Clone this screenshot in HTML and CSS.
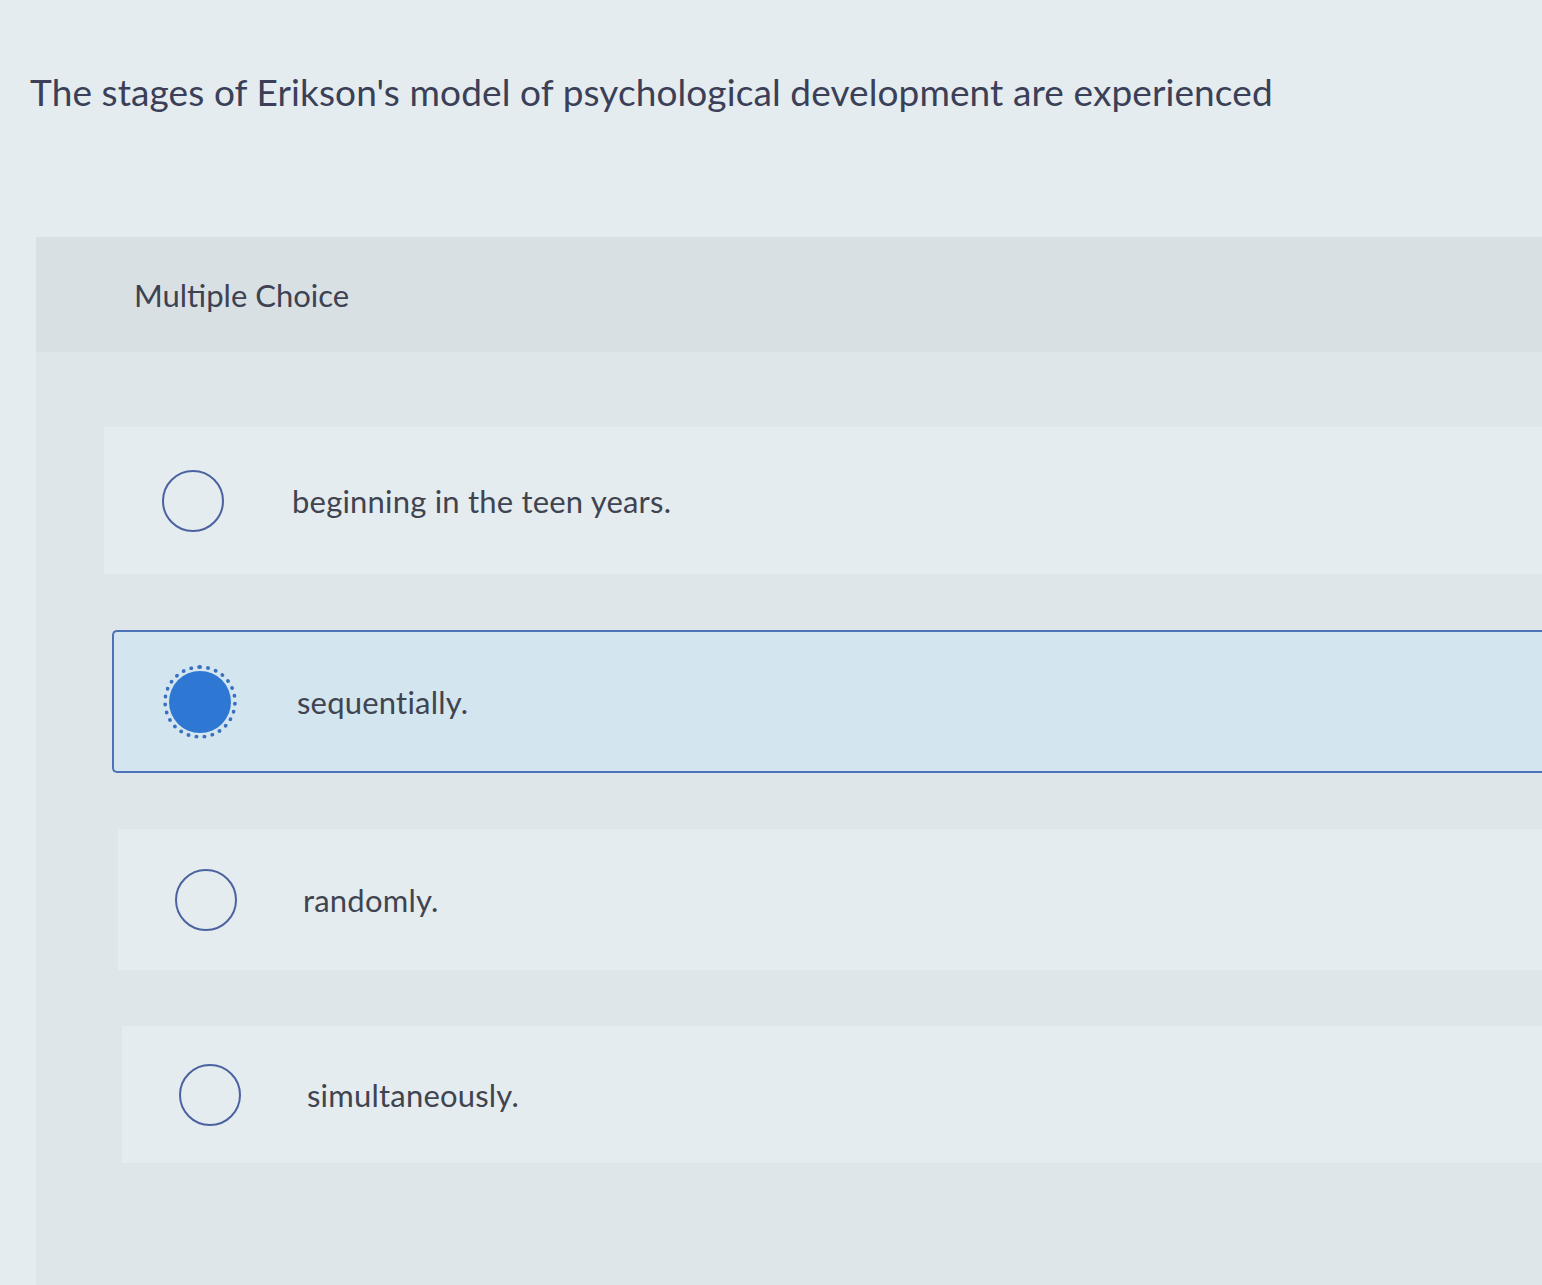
FILE: index.html
```html
<!DOCTYPE html>
<html lang="en">
<head>
<meta charset="utf-8">
<title>Multiple Choice</title>
<link rel="stylesheet" href="styles.css">
</head>
<body>
<main class="page">
  <h1 class="question">The stages of Erikson's model of psychological development are experienced</h1>
  <section class="card">
    <div class="card-head">Multiple Choice</div>
    <div class="options">
      <label class="option opt1">
        <span class="radio"></span>
        <span class="opt-text">beginning in the teen years.</span>
      </label>
      <label class="option opt2 selected">
        <span class="radio checked"></span>
        <span class="opt-text">sequentially.</span>
      </label>
      <label class="option opt3">
        <span class="radio"></span>
        <span class="opt-text">randomly.</span>
      </label>
      <label class="option opt4">
        <span class="radio"></span>
        <span class="opt-text">simultaneously.</span>
      </label>
    </div>
  </section>
</main>
</body>
</html>
```
FILE: styles.css
```css
html, body {
  margin: 0;
  padding: 0;
}
body {
  background: #e4ecef;
  font-family: "Lato", "Open Sans", "Liberation Sans", sans-serif;
  color: #3c4150;
  overflow: hidden;
}
.page {
  width: 1542px;
  height: 1285px;
  display: flex;
  flex-direction: column;
}
.question {
  margin: 0;
  padding: 66px 0 0 30px;
  height: 237px;
  flex: none;
  box-sizing: border-box;
  font-size: 37px;
  font-weight: 400;
  color: #3b3f57;
  letter-spacing: 0.1px;
  line-height: 52px;
}
.card {
  margin-left: 36px;
  flex: 1;
  background: #dfe6e9;
  display: flex;
  flex-direction: column;
}
.card-head {
  height: 115px;
  background: #d9e0e3;
  display: flex;
  align-items: center;
  padding-left: 98px;
  font-size: 31px;
  color: #3d4252;
}
.options {
  padding-top: 75px;
  display: flex;
  flex-direction: column;
  gap: 56px;
}
.option {
  display: flex;
  align-items: center;
  height: 145px;
  background: #e5ecef;
  box-sizing: border-box;
  font-size: 31px;
  color: #3f4450;
}
.opt1 { margin-left: 68px; height: 147px; }
.opt2 { margin-left: 76px; height: 143px; }
.opt3 { margin-left: 82px; height: 141px; }
.opt4 { margin-left: 86px; height: 137px; }
.option.selected {
  background: #d3e5ee;
  border: 2px solid #4d72b8;
  border-right: none;
  border-radius: 5px 0 0 5px;
}
.radio {
  width: 62px;
  height: 62px;
  border: 2px solid #4a62a0;
  border-radius: 50%;
  box-sizing: border-box;
  margin-left: 57px;
  margin-right: 66px;
  flex: none;
}
.opt1 .radio { margin-left: 58px; margin-right: 68px; }
.radio.checked {
  border: none;
  background: #2e77d3;
  width: 62px;
  height: 62px;
  margin-left: 55px;
  outline: 4px dotted #3b6fc0;
  outline-offset: 2px;
  border-radius: 50%;
}
.opt-text {
  letter-spacing: 0.2px;
}
```
